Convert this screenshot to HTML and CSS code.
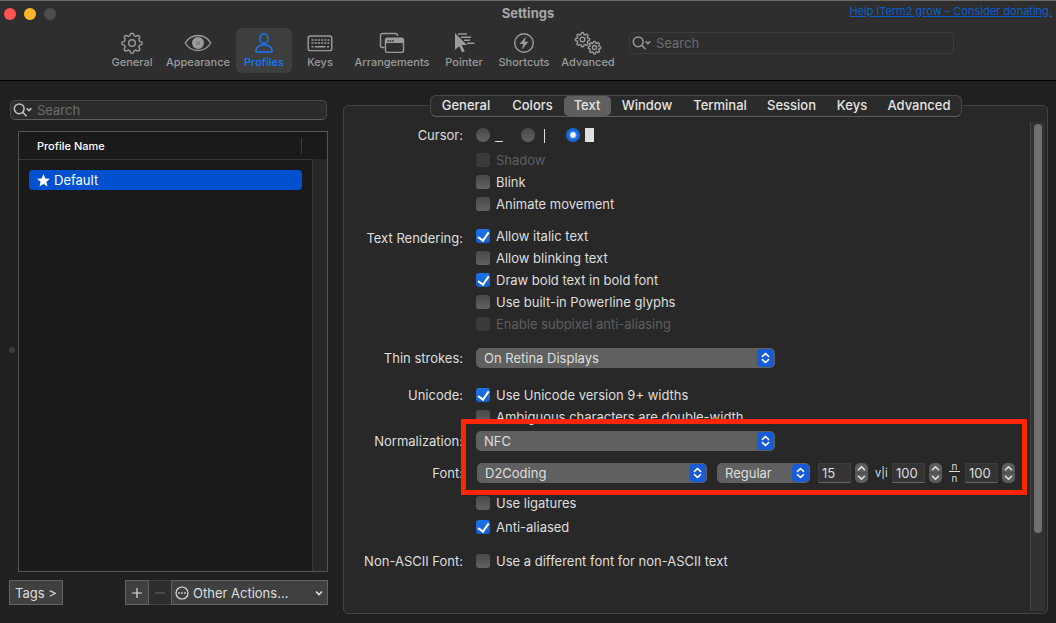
FILE: index.html
```html
<!DOCTYPE html>
<html lang="en">
<head>
<meta charset="utf-8">
<title>Settings</title>
<link rel="stylesheet" href="styles.css">
</head>
<body>
<svg class="defs" aria-hidden="true">
  <symbol id="updown" viewBox="0 0 18 18"><path d="M5.800 7.300 9 4.200l3.200 3.100M5.800 10.700 9 13.800l3.200-3.100" fill="none" stroke="#fff" stroke-width="1.700" stroke-linecap="round" stroke-linejoin="round"/></symbol>
  <symbol id="stepper" viewBox="0 0 13 20"><rect width="13" height="20" rx="5" fill="#5c5c5c"/><path d="M0 10h13" stroke="#494949"/><path d="M3.500 6.700l3-3 3 3M3.500 13.300l3 3 3-3" fill="none" stroke="#e4e4e4" stroke-width="1.600" stroke-linecap="round" stroke-linejoin="round"/></symbol>
  <symbol id="search" viewBox="0 0 20 16"><circle cx="6.200" cy="6.800" r="4.900"/><path d="M9.800 10.400l3.800 3.800"/><path d="M13.600 6.200l2.400 2.400 2.400-2.400"/></symbol>
  <symbol id="gear" viewBox="0 0 24 24"><path d="M12 2.200c.9 0 1.500.3 1.700 1.100l.4 1.500 1.700.7 1.400-.8c.7-.4 1.400-.2 2 .4s.8 1.300.4 2l-.8 1.400.7 1.700 1.500.4c.8.2 1.100.8 1.100 1.600s-.3 1.500-1.100 1.700l-1.500.4-.7 1.700.8 1.400c.4.7.2 1.400-.4 2s-1.300.8-2 .4l-1.400-.8-1.700.7-.4 1.500c-.2.8-.8 1.100-1.700 1.100s-1.500-.3-1.700-1.100l-.4-1.500-1.700-.7-1.400.8c-.7.4-1.400.2-2-.4s-.8-1.300-.4-2l.8-1.400-.7-1.700-1.500-.4c-.8-.2-1.100-.8-1.100-1.700s.3-1.400 1.100-1.600l1.500-.4.7-1.700-.8-1.400c-.4-.7-.2-1.400.4-2s1.300-.8 2-.4l1.400.8 1.700-.7.4-1.500c.2-.8.8-1.100 1.700-1.100z"/><circle cx="12" cy="12" r="3.300"/></symbol>
</svg>
<header class="header">
  <div class="titlebar">
    <div class="lights"><button class="light close" aria-label="Close"></button><button class="light minimize" aria-label="Minimize"></button><button class="light" aria-label="Zoom" disabled></button></div>
    <h1 class="title">Settings</h1>
    <a class="donate" href="#donate">Help iTerm2 grow – Consider donating.</a>
  </div>
  <div class="toolbar">
    <nav class="tools">
      <button class="tool"><svg class="icon" viewBox="0 0 28 24"><use href="#gear" x="2" width="24" height="24"/></svg>General</button>
      <button class="tool"><svg class="icon" viewBox="0 0 28 24"><path d="M1.200 12C4 7.500 8.500 4.500 14 4.500S24 7.500 26.800 12C24 16.500 19.500 19.500 14 19.500S4 16.500 1.200 12z"/><circle cx="14" cy="12" r="4" stroke-width="4"/><circle cx="14" cy="12" r="1.200"/></svg>Appearance</button>
      <button class="tool active"><svg class="icon" viewBox="0 0 28 24"><ellipse cx="14" cy="7.600" rx="4.100" ry="4.900"/><path d="M5.800 20c.4-3.600 3.600-6 8.200-6s7.800 2.400 8.200 6c0 .7-.4 1-1 1H6.800c-.6 0-1-.3-1-1z"/></svg>Profiles</button>
      <button class="tool"><svg class="icon" viewBox="0 0 28 24"><rect x="2.200" y="5" width="23.600" height="14.600" rx="2.200"/><path d="M5.500 9h18M5.500 12h18" stroke-dasharray="2 1.200" stroke-width="1.700"/><path d="M5.500 15.800h2M9 15.800h10.500M21 15.800h2" stroke-width="1.500"/></svg>Keys</button>
      <button class="tool"><svg class="icon" viewBox="0 0 28 24"><path d="M6.500 16.500H4.500a2 2 0 0 1-2-2V4.500a2 2 0 0 1 2-2H17.500a2 2 0 0 1 2 2V5"/><rect x="7.500" y="7.200" width="18" height="14.200" rx="2"/><path d="M8 10h17" stroke-width="4"/><path d="M9.500 10h6" stroke="#2e2e2e" stroke-dasharray="1.500 .8"/></svg>Arrangements</button>
      <button class="tool"><svg class="icon" viewBox="0 0 28 24"><path d="M5 2v17l4.200-3.800 3 6.300 2.500-1.200-3-6.200H17z" fill="currentColor" stroke="none"/><path d="M8 3h9M11 6.300h10M14 9.300h6M17 12.300h7.500" stroke-width="1.500"/></svg>Pointer</button>
      <button class="tool"><svg class="icon" viewBox="0 0 28 24"><circle cx="14" cy="12" r="9.300"/><path d="M16 5.500 9.500 13h3.700l-1.400 5.500 6.700-7.800h-3.800z" fill="currentColor" stroke="none"/></svg>Shortcuts</button>
      <button class="tool"><svg class="icon" viewBox="0 0 28 24"><use href="#gear" width="17" height="17" stroke-width="2"/><use href="#gear" x="13" y="9" width="15" height="15" stroke-width="2.200"/></svg>Advanced</button>
    </nav>
    <label class="search toolbar-search"><svg class="search-icon"><use href="#search"/></svg><input type="search" placeholder="Search" aria-label="Search settings"></label>
  </div>
</header>
<main class="main">
  <section class="sidebar">
    <label class="search"><svg class="search-icon"><use href="#search"/></svg><input type="search" placeholder="Search" aria-label="Search profiles"></label>
    <div class="profiles">
      <div class="profiles-head">Profile Name</div>
      <div class="profiles-body">
        <ul class="profile-list"><li class="profile"><svg class="star" viewBox="0 0 12 12"><path d="M6 0l1.700 4.100 4.300.3-3.300 2.800 1 4.300L6 9.200l-3.700 2.300 1-4.300L0 4.400l4.300-.3z" fill="#fff"/></svg>Default</li></ul>
        <div class="list-track"></div>
      </div>
    </div>
    <div class="handle"></div>
    <div class="actions">
      <button class="action tags">Tags &gt;</button>
      <div class="action-group">
        <button class="action square" aria-label="Add profile"><svg viewBox="0 0 12 12" class="sign"><path d="M6 1v10M1 6h10"/></svg></button>
        <button class="action square" aria-label="Remove profile" disabled><svg viewBox="0 0 12 12" class="sign"><path d="M1 6h10"/></svg></button>
        <button class="action other"><svg class="dots" viewBox="0 0 14 14"><circle cx="7" cy="7" r="6" fill="none" stroke="#dedede" stroke-width="1.200"/><path d="M3.300 7h1.600M6.200 7h1.600M9.100 7h1.600" stroke="#dedede" stroke-width="1.600"/></svg><span>Other Actions...</span><svg class="caret" viewBox="0 0 8 8"><path d="M1 2.500l3 3 3-3" fill="none" stroke="#dedede" stroke-width="1.600"/></svg></button>
      </div>
    </div>
  </section>
  <section class="content">
    <nav class="tabs">
      <button class="tab">General</button><button class="tab">Colors</button><button class="tab selected">Text</button><button class="tab">Window</button><button class="tab">Terminal</button><button class="tab">Session</button><button class="tab">Keys</button><button class="tab">Advanced</button>
    </nav>
    <div class="panel">
      <form class="form">
        <div class="group">
          <span class="label">Cursor:</span>
          <div class="radios">
            <label class="radio"><input type="radio" name="cursor" aria-label="Underline"><i class="shape underline"></i></label>
            <label class="radio"><input type="radio" name="cursor" aria-label="Vertical bar"><i class="shape bar"></i></label>
            <label class="radio"><input type="radio" name="cursor" aria-label="Box" checked><i class="shape box"></i></label>
          </div>
        </div>
        <div class="group after-cursor">
          <div class="checks">
            <label class="check off"><input type="checkbox" disabled>Shadow</label>
            <label class="check"><input type="checkbox">Blink</label>
            <label class="check"><input type="checkbox">Animate movement</label>
          </div>
        </div>
        <div class="group rendering">
          <span class="label">Text Rendering:</span>
          <div class="checks">
            <label class="check"><input type="checkbox" checked>Allow italic text</label>
            <label class="check"><input type="checkbox">Allow blinking text</label>
            <label class="check"><input type="checkbox" checked>Draw bold text in bold font</label>
            <label class="check"><input type="checkbox">Use built-in Powerline glyphs</label>
            <label class="check off"><input type="checkbox" disabled>Enable subpixel anti-aliasing</label>
          </div>
        </div>
        <div class="group thin">
          <label class="label" for="strokes">Thin strokes:</label>
          <div class="select wide"><select id="strokes"><option>On Retina Displays</option></select><svg class="badge"><use href="#updown"/></svg></div>
        </div>
        <div class="group unicode">
          <span class="label">Unicode:</span>
          <div class="checks">
            <label class="check"><input type="checkbox" checked>Use Unicode version 9+ widths</label>
            <label class="check"><input type="checkbox">Ambiguous characters are double-width</label>
          </div>
        </div>
        <div class="marked">
          <div class="group">
            <label class="label" for="norm">Normalization:</label>
            <div class="select wide"><select id="norm"><option>NFC</option></select><svg class="badge"><use href="#updown"/></svg></div>
          </div>
          <div class="group">
            <label class="label" for="font">Font:</label>
            <div class="font-row">
              <div class="select family"><select id="font"><option>D2Coding</option></select><svg class="badge"><use href="#updown"/></svg></div>
              <div class="select style"><select aria-label="Font style"><option>Regular</option></select><svg class="badge"><use href="#updown"/></svg></div>
              <div class="number"><input type="text" value="15" aria-label="Font size"><button type="button" class="step" aria-label="Change font size"><svg><use href="#stepper"/></svg></button></div>
              <span class="spacing">v|i</span>
              <div class="number"><input type="text" value="100" aria-label="Horizontal spacing"><button type="button" class="step" aria-label="Change horizontal spacing"><svg><use href="#stepper"/></svg></button></div>
              <span class="fraction"><span>n</span><span>n</span></span>
              <div class="number"><input type="text" value="100" aria-label="Vertical spacing"><button type="button" class="step" aria-label="Change vertical spacing"><svg><use href="#stepper"/></svg></button></div>
            </div>
          </div>
          <div class="marker"></div>
        </div>
        <div class="group ligatures">
          <div class="checks spaced">
            <label class="check"><input type="checkbox">Use ligatures</label>
            <label class="check"><input type="checkbox" checked>Anti-aliased</label>
          </div>
        </div>
        <div class="group nonascii">
          <span class="label">Non-ASCII Font:</span>
          <div class="checks"><label class="check"><input type="checkbox">Use a different font for non-ASCII text</label></div>
        </div>
      </form>
      <div class="track"><div class="thumb"></div></div>
    </div>
  </section>
</main>
</body>
</html>
```
FILE: styles.css
```css
* { box-sizing: border-box; }
body {
  margin: 0;
  min-height: 100vh;
  display: flex;
  flex-direction: column;
  background: #202020;
  color: #dfdfdf;
  font: 400 13px/16px Inter, "Liberation Sans", sans-serif;
}
button, input, select { font: inherit; color: inherit; margin: 0; }
button { border: 0; padding: 0; background: none; }
.defs { position: absolute; width: 0; height: 0; }

/* Header */
.header { background: #2e2e2e; border-top: 1px solid #6b6b6b; border-bottom: 1px solid #000; }
.titlebar {
  display: grid;
  grid-template-columns: 1fr auto 1fr;
  height: 27px;
  padding: 0 4px;
}
.lights { display: flex; gap: 8px; padding-top: 7px; }
.light { width: 12px; height: 12px; border-radius: 50%; background: #4d4d4d; }
.close { background: #ff544d; }
.minimize { background: #ffb429; }
.title { margin: 0; padding-top: 4px; font-size: 13px; font-weight: 700; color: #a7a7a7; }
.donate { justify-self: end; padding-top: 2px; font-size: 11px; color: #0a5fcf; }
.toolbar { display: flex; gap: 9px; height: 52px; padding: 0 102px 0 104px; }
.tools { display: grid; grid-template-columns: 56px 76px 56px 56px 88px 56px 64px 64px; height: 45px; }
.tool {
  display: flex;
  flex-direction: column;
  align-items: center;
  padding-top: 3px;
  border-radius: 6px;
  font-size: 11px;
  line-height: 14px;
  font-weight: 500;
  color: #9b9b9b;
}
.active { background: #3e3e3e; color: #147aff; }
.icon { width: 28px; height: 24px; fill: none; stroke: currentColor; stroke-width: 1.4; }
.search {
  display: flex;
  align-items: center;
  gap: 4px;
  height: 20px;
  padding: 0 2px;
  border: 1px solid #484848;
  border-bottom-color: #5c5c5c;
  border-radius: 5px;
  background: #2c2c2c;
}
.search-icon { flex: none; width: 20px; height: 16px; fill: none; stroke: #c4c4c4; stroke-width: 1.5; }
.search input { flex: 1; min-width: 0; padding: 0; border: 0; outline: 0; background: none; appearance: none; }
.search input::placeholder { color: #6c6c6c; opacity: 1; }
.toolbar-search { flex: 1; height: 22px; margin-top: 4px; border-color: #3d3d3d; background: none; }
.toolbar-search .search-icon { stroke: #969696; }

/* Sidebar */
.main { flex: 1; display: grid; grid-template-columns: 319px 1fr; gap: 15px; padding: 0 8px 0 9px; }
.sidebar { position: relative; display: flex; flex-direction: column; padding: 19px 0 18px; }
.sidebar > .search { margin: 0 1px; }
.profiles { flex: 1; display: flex; flex-direction: column; margin: 11px 0 8px 9px; border: 1px solid #555; background: #1a1a1a; }
.profiles-head { display: flex; align-items: center; height: 27px; padding-left: 18px; font-size: 11px; font-weight: 500; color: #fff; }
.profiles-head::after { content: ""; height: 16px; margin: 0 25px 0 auto; border-right: 1px solid #3d3d3d; }
.profiles-body { flex: 1; display: flex; }
.profile-list { flex: 1; margin: 0; padding: 10px; border-top: 1px solid #383838; list-style: none; }
.profile { display: flex; align-items: center; gap: 4px; height: 20px; padding-left: 8px; border-radius: 4px; background: #0050cf; color: #fff; }
.star { width: 13px; height: 13px; }
.list-track { width: 15px; border-left: 1px solid #363636; background: #282828; }
.handle { position: absolute; left: 0; top: 49%; width: 6px; height: 6px; border-radius: 50%; background: #3c3c3c; }
.actions { display: flex; justify-content: space-between; height: 25px; }
.action { display: flex; align-items: center; border: 1px solid #636363; background: #404040; }
.tags { padding: 0 5px; }
.action-group { display: flex; }
.square { justify-content: center; width: 24px; }
.square:disabled { width: 22px; border-color: #414141; border-width: 1px 0; background: #2d2d2d; }
.sign { width: 12px; height: 12px; fill: none; stroke: #dedede; stroke-width: 1.2; }
.square:disabled .sign { stroke: #606060; }
.other { gap: 4px; width: 157px; padding: 0 4px 0 3px; }
.dots { width: 14px; height: 14px; }
.caret { width: 8px; height: 8px; margin-left: auto; }

/* Tabs and panel */
.content { display: flex; flex-direction: column; padding: 14px 0 9px; }
.tabs {
  position: relative;
  align-self: center;
  display: grid;
  grid-template-columns: 71px 62px 47px 73px 73px 70px 51px 83px;
  height: 22px;
  margin-bottom: -12px;
  border: 1px solid #484848;
  border-bottom-color: #5c5c5c;
  border-radius: 6px;
  background: #2b2b2b;
  font-weight: 500;
}
.tab { padding-bottom: 2px; border-radius: 5px; color: #e4e4e4; }
.selected { background: #5f5f5f; }
.panel { flex: 1; display: flex; border: 1px solid #434343; border-radius: 5px; background: #282828; }
.form { flex: 1; padding-top: 18px; }
.track { width: 15px; margin: 16px 2px 2px 0; padding: 2px 3px 0; border-left: 1px solid #444; background: #323232; }
.thumb { width: 8px; height: 84%; border-radius: 4px; background: #707070; }

/* Form rows */
.group { display: grid; grid-template-columns: 119px 1fr; column-gap: 13px; }
.label { grid-column: 1; justify-self: end; line-height: 22px; }
.group > :not(.label) { grid-column: 2; }
.after-cursor { margin-top: 3px; }
.rendering { margin-top: 10px; }
.rendering .label { line-height: 26px; }
.thin { margin-top: 12px; }
.unicode { margin-top: 15px; }
.ligatures { margin-top: 8px; }
.nonascii { margin-top: 12px; }
.radios { display: flex; }
.radio { display: flex; align-items: center; gap: 5px; width: 45px; height: 22px; }
.radio input, .check input {
  appearance: none;
  width: 14px;
  height: 14px;
  border-radius: 3px;
  background: linear-gradient(#484848, #626262);
}
.radio input { border-radius: 50%; }
.radio input:checked { background: radial-gradient(circle, #fff 2px, #1768dd 4px); }
.shape { background: #dfdfdf; }
.underline { width: 8px; height: 1px; margin-top: 12px; }
.bar { width: 1px; height: 14px; margin: 2px 0 0 4px; }
.box { width: 9px; height: 14px; }
.checks { display: flex; flex-direction: column; align-items: flex-start; }
.spaced { gap: 2px; }
.check { display: flex; align-items: center; gap: 6px; height: 22px; }
.check input { display: grid; place-items: center; }
.check input:checked { background: linear-gradient(#1d72ea, #165fd0); }
.check input:checked::after {
  content: "";
  width: 5px;
  height: 9px;
  margin-bottom: 2px;
  border: solid #fff;
  border-width: 0 2px 2px 0;
  transform: rotate(35deg);
}
.off { color: #5f5f5f; }
.check input:disabled { background: #3a3a3a; }
.select { position: relative; height: 20px; align-self: center; }
.select select { appearance: none; display: block; width: 100%; height: 20px; padding: 0 22px 1px 8px; border: 0; border-radius: 5px; background: #606060; }
.wide { width: 299px; }
.family { width: 230px; margin-right: 2px; }
.style { width: 93px; }
.badge { position: absolute; right: 1px; top: 1px; width: 17px; height: 18px; border-radius: 4px; background: #175bd6; pointer-events: none; }
.marked { position: relative; display: grid; grid-auto-rows: 22px; row-gap: 10px; margin-top: 2px; }
.marker { position: absolute; inset: -11px 3px -11px 117px; border: 5px solid #fe2600; pointer-events: none; }
.font-row { display: flex; align-items: center; gap: 8px; height: 22px; padding-left: 1px; }
.number { display: flex; gap: 4px; }
.number input { width: 33px; height: 20px; padding: 0 3px; border: 1px solid #3d3d3d; border-bottom-color: #666; background: #343434; }
.step svg { display: block; width: 13px; height: 20px; }
.spacing { width: 12px; margin: 0 -3px 0 -1px; font-size: 11px; white-space: nowrap; }
.fraction { display: grid; width: 11px; margin: 0 -3px 0 -1px; text-align: center; font-size: 10px; line-height: 10px; }
.fraction span:first-child { line-height: 9px; border-bottom: 1px solid #dfdfdf; }
.fraction span:last-child { line-height: 12px; }
```
